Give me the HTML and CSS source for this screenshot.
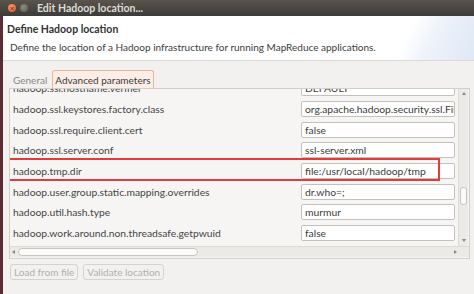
FILE: index.html
```html
<!DOCTYPE html>
<html lang="en">
<head>
    <meta charset="UTF-8">
    <title>Edit Hadoop location...</title>
    <link rel="stylesheet" href="styles.css">
</head>
<body>
    <div class="window">
        <div class="titlebar">
            <span class="wm-btn close">&times;</span>
            <span class="wm-btn minimize"></span>
            <span class="title">Edit Hadoop location...</span>
        </div>
        <div class="frame">
            <div class="dialog">
                <div class="banner">
                    <h1>Define Hadoop location</h1>
                    <p>Define the location of a Hadoop infrastructure for running MapReduce applications.</p>
                </div>
                <div class="content">
                    <div class="tabs">
                        <span class="tab">General</span>
                        <span class="tab active">Advanced parameters</span>
                    </div>
                    <div class="panel">
                        <div class="viewport">
                            <div class="rows">
                                <div class="row"><span class="key">hadoop.ssl.hostname.verifier</span><span class="field">DEFAULT</span></div>
                                <div class="row"><span class="key">hadoop.ssl.keystores.factory.class</span><span class="field">org.apache.hadoop.security.ssl.FileBasedKeyStoresFactory</span></div>
                                <div class="row"><span class="key">hadoop.ssl.require.client.cert</span><span class="field">false</span></div>
                                <div class="row"><span class="key">hadoop.ssl.server.conf</span><span class="field">ssl-server.xml</span></div>
                                <div class="row marked"><span class="key">hadoop.tmp.dir</span><span class="field">file:/usr/local/hadoop/tmp</span><span class="highlight"></span></div>
                                <div class="row"><span class="key">hadoop.user.group.static.mapping.overrides</span><span class="field">dr.who=;</span></div>
                                <div class="row"><span class="key">hadoop.util.hash.type</span><span class="field">murmur</span></div>
                                <div class="row"><span class="key">hadoop.work.around.non.threadsafe.getpwuid</span><span class="field">false</span></div>
                            </div>
                            <div class="vscroll">
                                <span class="arrow up"></span>
                                <span class="vtrack"><span class="vthumb"></span></span>
                                <span class="arrow down"></span>
                            </div>
                        </div>
                        <div class="hscroll">
                            <span class="arrow left"></span>
                            <span class="htrack"><span class="hthumb"></span></span>
                            <span class="arrow right"></span>
                        </div>
                    </div>
                    <div class="buttons">
                        <button disabled>Load from file</button>
                        <button disabled>Validate location</button>
                    </div>
                </div>
            </div>
        </div>
    </div>
</body>
</html>
```

FILE: styles.css
```css
/* Ubuntu Ambiance look for the Eclipse "Edit Hadoop location" wizard */
body {
    margin: 0;
    font-family: 'Lato', 'Open Sans', sans-serif;
    font-size: 10px;
    color: #3c3c3c;
    background: #f2f1f0;
}

.window {
    width: 474px;
    height: 294px;
    display: flex;
    flex-direction: column;
    overflow: hidden;
}

/* window manager title bar */
.titlebar {
    height: 16px;
    flex: none;
    display: flex;
    align-items: center;
    padding-left: 8px;
    background: linear-gradient(#59554d, #3c3b37);
    color: #dfdbd2;
}

.wm-btn {
    width: 8px;
    height: 8px;
    border-radius: 50%;
    margin-right: 4px;
    font-size: 8px;
    line-height: 8px;
    text-align: center;
    color: #5a2d18;
    overflow: hidden;
}

.wm-btn.close {
    background: radial-gradient(circle at 40% 35%, #f79a6e, #e0521e);
}

.wm-btn.minimize {
    background: radial-gradient(circle at 40% 35%, #8d8a84, #5d5a54);
}

.title {
    margin-left: 5px;
    font-weight: 700;
    font-size: 10.5px;
}

.frame {
    flex: 1;
    display: flex;
    border-left: 3px solid #5e2a33;
}

.dialog {
    flex: 1;
    display: flex;
    flex-direction: column;
}

/* wizard header */
.banner {
    height: 44px;
    flex: none;
    background: #fff linear-gradient(115deg, #fff 84%, #edf2fa 90%, #dfe8f6 100%);
    border-bottom: 1px solid #dcd9d4;
    padding: 0 0 0 4px;
}

.banner h1 {
    margin: 7px 0 0;
    font-size: 10.5px;
    font-weight: 700;
    color: #333;
}

.banner p {
    margin: 6px 0 0 3px;
    font-size: 10px;
    color: #3c3c3c;
}

.content {
    flex: 1;
    padding: 9px 4px 0 6px;
    display: flex;
    flex-direction: column;
}

/* tabs */
.tabs {
    display: flex;
    height: 18px;
    padding-left: 1px;
    gap: 2px;
}

.tab {
    padding: 3px 2px 0;
    color: #8a8783;
    border: 1px solid transparent;
    border-bottom: none;
    border-radius: 3px 3px 0 0;
    font-size: 10px;
}

.tab.active {
    color: #3c3c3c;
    background: #fbeee6;
    border-color: #eeb594;
}

/* property table */
.panel {
    height: 169px;
    flex: none;
    border: 1px solid #d3d0cb;
    background: #f6f5f4;
    display: flex;
    flex-direction: column;
}

.viewport {
    height: 157px;
    display: flex;
    overflow: hidden;
}

.rows {
    flex: 1;
    margin-top: -11px;
    padding-left: 3px;
}

.row {
    position: relative;
    height: 20.67px;
    display: flex;
    align-items: center;
}

.key {
    flex: 1;
    white-space: nowrap;
    color: #454545;
    font-size: 10.3px;
}

.field {
    width: 146px;
    height: 14px;
    line-height: 14px;
    padding: 0 3px;
    margin-right: 1px;
    background: #fff;
    border: 1px solid #c4c1bc;
    border-radius: 2px;
    white-space: nowrap;
    overflow: hidden;
    color: #3c3c3c;
    font-size: 10.3px;
}

/* red annotation box drawn over the tmp.dir row */
.highlight {
    position: absolute;
    left: -6px;
    right: 16px;
    top: -3px;
    bottom: 0;
    border: 2px solid #e23b3b;
}

.vscroll {
    width: 9px;
    margin: 0 1px 0 2px;
    display: flex;
    flex-direction: column;
    align-items: center;
    background: #eceae7;
    border-left: 1px solid #dedbd7;
}

.arrow {
    width: 0;
    height: 0;
    border: 2px solid transparent;
    flex: none;
}

.arrow.up {
    margin: 3px 0 2px;
    border-bottom: 3px solid #8a8783;
    border-top: none;
}

.arrow.down {
    margin: 2px 0 4px;
    border-top: 3px solid #8a8783;
    border-bottom: none;
}

.vtrack {
    flex: 1;
    align-self: stretch;
    position: relative;
}

.vthumb {
    position: absolute;
    left: 1px;
    right: 1px;
    top: 90px;
    height: 16px;
    background: #fbfaf9;
    border: 1px solid #c9c6c1;
    border-radius: 3px;
}

.hscroll {
    height: 10px;
    display: flex;
    align-items: center;
    padding: 0 12px 0 2px;
    background: #eceae7;
    border-top: 1px solid #dedbd7;
}

.arrow.left {
    border-right: 3px solid #8a8783;
    border-left: none;
}

.arrow.right {
    border-left: 3px solid #8a8783;
    border-right: none;
}

.htrack {
    flex: 1;
    height: 8px;
    margin: 0 3px;
}

.hthumb {
    display: block;
    width: 178px;
    height: 6px;
    background: #fbfaf9;
    border: 1px solid #c9c6c1;
    border-radius: 4px;
}

/* disabled buttons */
.buttons {
    display: flex;
    gap: 5px;
    margin-top: 5px;
    padding-left: 1px;
}

.buttons button {
    font-family: inherit;
    font-size: 10px;
    height: 16px;
    padding: 0 3px;
    color: #b3afa9;
    background: #f2f1f0;
    border: 1px solid #d6d3ce;
    border-radius: 3px;
}
```
